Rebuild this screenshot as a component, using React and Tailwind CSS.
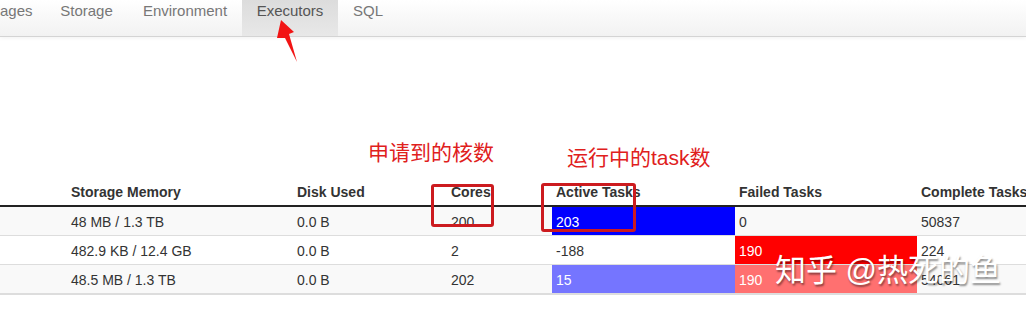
import React from 'react';

const tabs = [
    { label: 'ages', w: 'w-[45px]' },
    { label: 'Storage', w: 'w-[83px]' },
    { label: 'Environment', w: 'w-[114px]' },
    { label: 'Executors', w: 'w-[96px]', active: true },
    { label: 'SQL', w: 'w-[60px]' },
];

const cols = ['', 'Storage Memory', 'Disk Used', 'Cores', 'Active Tasks', 'Failed Tasks', 'Complete Tasks'];

const rows = [
    { bg: 'bg-[#f9f9f9]', cells: ['', '48 MB / 1.3 TB', '0.0 B', '200', '203', '0', '50837'], active: 'bg-[#0000ff] text-white', failed: '' },
    { bg: 'bg-white', cells: ['', '482.9 KB / 12.4 GB', '0.0 B', '2', '-188', '190', '224'], active: '', failed: 'bg-[#ff0000] text-white' },
    { bg: 'bg-[#f9f9f9]', cells: ['', '48.5 MB / 1.3 TB', '0.0 B', '202', '15', '190', '54061'], active: 'bg-[#7575ff] text-white', failed: 'bg-[#ff7070] text-white' },
];

const grid = 'grid grid-cols-[67px_226px_154px_105px_183px_182px_200px]';

const App = () => {
    return (
        <div className="relative w-[1026px] h-[313px] overflow-hidden bg-white font-['Liberation_Sans','Noto_Sans_CJK_SC',sans-serif] text-[14px] text-[#333]">
            {/* Navbar */}
            <div className="flex h-[37px] bg-gradient-to-b from-white to-[#f2f2f2] border-b border-[#d4d4d4] shadow-[0_1px_4px_rgba(0,0,0,0.06)]">
                {tabs.map(t => (
                    <div
                        key={t.label}
                        className={`${t.w} flex pt-[1px] text-[15px] leading-[20px] ${t.label === 'ages' ? 'justify-start' : 'justify-center'} ${t.active ? 'bg-gradient-to-b from-[#dcdcdc] to-[#e8e8e8] text-[#555]' : 'text-[#777]'}`}
                    >
                        {t.label}
                    </div>
                ))}
            </div>

            {/* Table */}
            <div className="mt-[139px]">
                <div className={`${grid} border-b-2 border-[#222]`}>
                    {cols.map((c, i) => (
                        <div key={i} className="px-[4px] pt-[7px] pb-[3px] leading-[19px] font-bold whitespace-nowrap">{c}</div>
                    ))}
                </div>
                {rows.map((r, ri) => (
                    <div key={ri} className={`${grid} ${r.bg} ${ri > 0 ? 'border-t border-[#dddddd]' : ''} ${ri === rows.length - 1 ? 'border-b-2 border-[#222]' : ''}`}>
                        {r.cells.map((c, i) => (
                            <div
                                key={i}
                                className={`px-[4px] pt-[5px] pb-[3px] leading-[20px] whitespace-nowrap ${i === 4 ? r.active : ''} ${i === 5 ? r.failed : ''}`}
                            >
                                {c}
                            </div>
                        ))}
                    </div>
                ))}
            </div>

            {/* Annotations */}
            <div className="absolute left-[368px] top-[139px] text-[21px] leading-[28px] text-[#e0201c]">申请到的核数</div>
            <div className="absolute left-[567px] top-[144px] text-[21px] leading-[28px] text-[#e0201c]">运行中的task数</div>
            <div className="absolute left-[431px] top-[184px] w-[63px] h-[43px] border-[3px] border-[#cc1b1f] rounded-[3px]" />
            <div className="absolute left-[541px] top-[183px] w-[95px] h-[49px] border-[3px] border-[#cc1b1f] rounded-[3px]" />

            <svg className="absolute left-0 top-0" width="400" height="80">
                <polygon points="281,20 294,32 289,34 297,62 285,38 277,38" fill="#f21414" />
            </svg>

            {/* Watermark */}
            <div className="absolute left-[775px] top-[251px] text-[31px] leading-[40px] text-white [text-shadow:1px_2px_2px_rgba(0,0,0,0.45)] whitespace-nowrap">
                知乎 @热死的鱼
            </div>
        </div>
    );
};

export default App;
